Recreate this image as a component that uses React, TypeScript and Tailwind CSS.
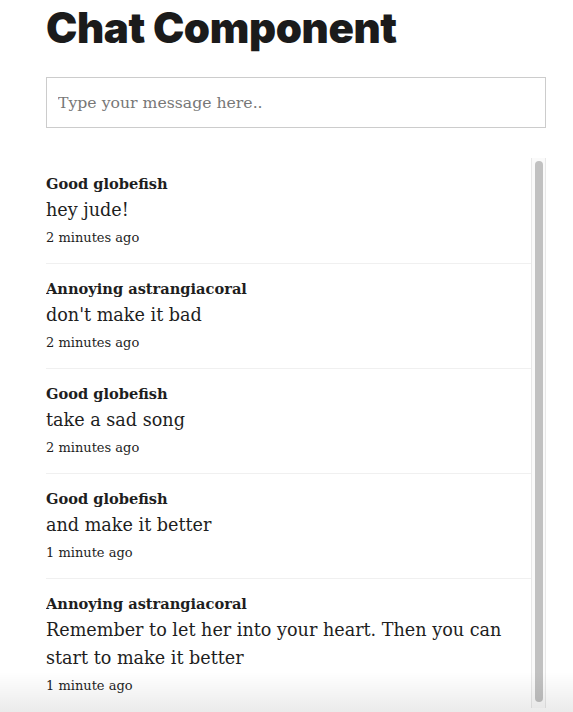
const messages = [
  { author: "Good globefish", text: "hey jude!", time: "2 minutes ago" },
  { author: "Annoying astrangiacoral", text: "don't make it bad", time: "2 minutes ago" },
  { author: "Good globefish", text: "take a sad song", time: "2 minutes ago" },
  { author: "Good globefish", text: "and make it better", time: "1 minute ago" },
  {
    author: "Annoying astrangiacoral",
    text: "Remember to let her into your heart. Then you can start to make it better",
    time: "1 minute ago",
  },
];

export default function App() {
  return (
    <div className="relative h-screen overflow-hidden bg-white font-['DejaVu_Serif',serif] text-[#1e1e1e]">
      <div className="ml-[46px] w-[500px]">
        <h1 className="pt-[3px] font-['Inter',sans-serif] text-[42px] font-black leading-[50px] tracking-[-0.4px] text-[#1b1b1b]">
          Chat Component
        </h1>
        <input
          type="text"
          placeholder="Type your message here.."
          className="mt-6 block h-[51px] w-full border border-[#cccccc] px-[11px] text-[15.7px] outline-none placeholder:text-[#777]"
        />
        <div className="mt-[30px] flex h-[550px]">
          <ul className="min-w-0 flex-1 divide-y divide-[#f0f0f0] overflow-hidden">
            {messages.map((m, i) => (
              <li key={i} className="pt-[15px] pb-[15px] first:pt-4">
                <p className="text-[14.6px] font-bold leading-[20px]">{m.author}</p>
                <p className="mt-[2px] text-[17.6px] leading-[28px]">{m.text}</p>
                <p className="mt-1 text-[13px] leading-[20px]">{m.time}</p>
              </li>
            ))}
          </ul>
          {/* fake scrollbar, headless shots hide the real one */}
          <div className="flex w-[15px] shrink-0 flex-col border-x border-[#e8e8e8] bg-[#fafafa] pt-[3px] pb-[6px] pl-[3px] pr-[2px]">
            <div className="flex-1 rounded-full bg-[#c1c1c1]" />
          </div>
        </div>
      </div>
      <div className="pointer-events-none absolute inset-x-0 bottom-0 h-[40px] bg-gradient-to-b from-black/0 to-black/[0.08]" />
    </div>
  );
}
